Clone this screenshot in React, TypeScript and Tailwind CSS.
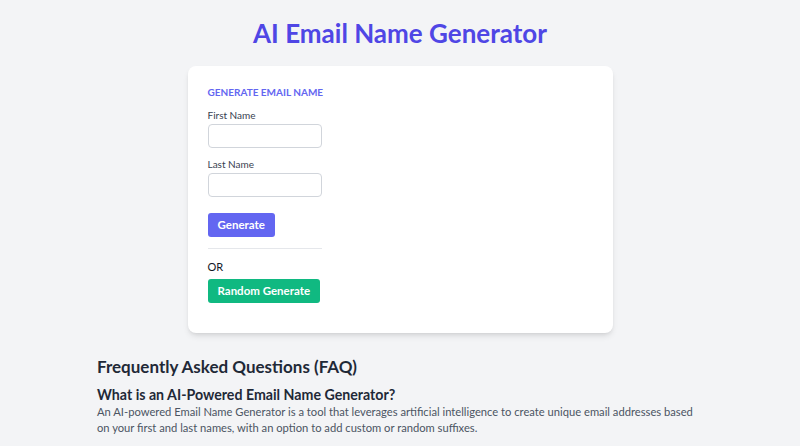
const App = () => {
  return (
    <div
      className="min-h-screen bg-[#f3f4f6] pt-[15px]"
      style={{ fontFamily: 'Lato, "Noto Sans", sans-serif' }}
    >
      <h1 className="text-center text-[26px] leading-[36px] font-bold text-[#4f46e5]">
        AI Email Name Generator
      </h1>

      <div className="mx-auto mt-[15px] w-[425px] rounded-lg bg-white px-[20px] pt-[18px] pb-[30px] shadow-md">
        <h2 className="text-[10px] leading-[16px] font-bold uppercase text-[#6366f1]">
          Generate Email Name
        </h2>

        <div className="mt-[7px] w-[114px]">
          <label className="block text-[10px] leading-[16px] text-[#374151]">First Name</label>
          <input
            type="text"
            className="mt-[1px] block h-[24px] w-[114px] rounded border border-[#d1d5db] bg-white"
          />
        </div>

        <div className="mt-[8px] w-[114px]">
          <label className="block text-[10px] leading-[16px] text-[#374151]">Last Name</label>
          <input
            type="text"
            className="mt-[1px] block h-[24px] w-[114px] rounded border border-[#d1d5db] bg-white"
          />
        </div>

        <button className="mt-[16px] block h-[24px] rounded-[3px] bg-[#6366f1] px-[10px] text-[11.5px] font-bold text-white">
          Generate
        </button>

        <hr className="mt-[11px] w-[114px] border-[#e5e7eb]" />

        <p className="mt-[10px] text-[11px] leading-[16px] text-[#111827]">OR</p>

        <button className="mt-[4px] block h-[24px] rounded-[3px] bg-[#10b981] px-[10px] text-[11.5px] font-bold text-white">
          Random Generate
        </button>
      </div>

      <div className="mx-auto mt-[22px] w-[606px]">
        <h2 className="text-[17px] leading-[24px] font-bold text-[#1f2937]">
          Frequently Asked Questions (FAQ)
        </h2>
        <h3 className="mt-[7px] text-[14.2px] leading-[18px] font-bold text-[#1f2937]">
          What is an AI-Powered Email Name Generator?
        </h3>
        <p className="text-[11.2px] leading-[16px] text-[#4b5563]">
          An AI-powered Email Name Generator is a tool that leverages artificial intelligence to create unique
          email addresses based on your first and last names, with an option to add custom or random suffixes.
        </p>
      </div>
    </div>
  );
};

export default App;
